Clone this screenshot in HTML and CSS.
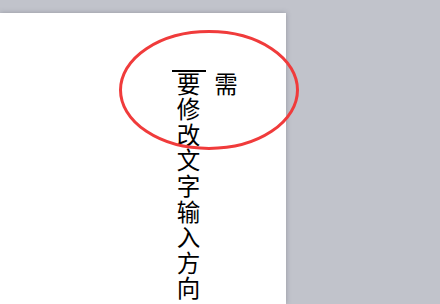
FILE: index.html
```html
<!DOCTYPE html>
<html lang="zh-CN">
<head>
<meta charset="utf-8">
<link rel="stylesheet" href="styles.css">
</head>
<body>
<div class="canvas">
  <div class="page">
    <div class="doc">
      <span class="caret"></span>
      <p class="vtext">需<br>要修改文字输入方向</p>
    </div>
    <svg class="mark" width="440" height="304" viewBox="0 0 440 304">
      <ellipse cx="209" cy="90" rx="88.5" ry="58.5" fill="none" stroke="#f03b3b" stroke-width="3"/>
    </svg>
  </div>
</div>
</body>
</html>
```
FILE: styles.css
```css
html, body {
  margin: 0;
  padding: 0;
  background: #c1c3cb;
  width: 440px;
  height: 304px;
  overflow: hidden;
}
.canvas {
  padding-top: 13px;
}
.page {
  position: relative;
  width: 286px;
  height: 291px;
  background: #ffffff;
  box-shadow: 0 0 5px rgba(70, 72, 85, 0.35);
}
.doc {
  position: relative;
  margin-left: 169px;
  padding-top: 59px;
  width: 76px;
}
.vtext {
  margin: 0;
  writing-mode: vertical-rl;
  font-family: "Noto Sans CJK SC", sans-serif;
  font-size: 23.5px;
  line-height: 37.5px;
  letter-spacing: 2.1px;
  color: #000;
}
.caret {
  position: absolute;
  left: 3px;
  top: 57px;
  width: 34px;
  height: 2px;
  background: #000;
}
.mark {
  position: absolute;
  left: 0;
  top: -13px;
  pointer-events: none;
}
```
